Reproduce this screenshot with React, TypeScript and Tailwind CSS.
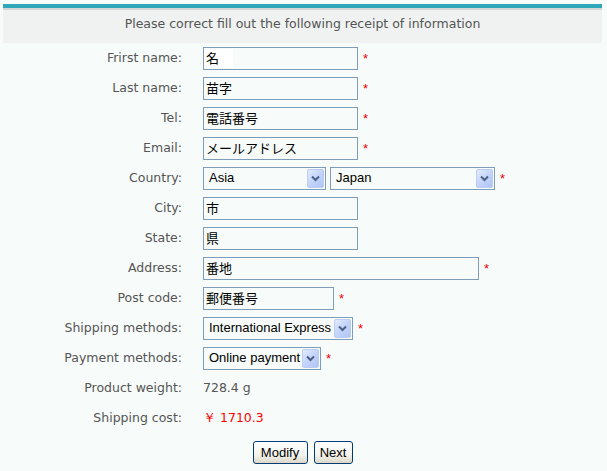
import React from "react";

const labelFont = { fontFamily: '"DejaVu Sans", Verdana, sans-serif' };

function Star() {
  return (
    <span
      className="ml-[5px] inline-block text-[13px] leading-none text-[#ee0000]"
      style={{ fontFamily: '"Liberation Sans", Arial, sans-serif' }}
    >
      *
    </span>
  );
}

function TextBox({ value, w, patch = false }: { value: string; w: string; patch?: boolean }) {
  return (
    <div
      className={
        "h-[23px] border border-[#7f9db9] flex items-center pl-[2px] text-[13px] text-black " +
        w +
        (patch ? " bg-[linear-gradient(to_right,#ffffff_0,#ffffff_29px,transparent_29px)] bg-no-repeat bg-[length:100%_19px] bg-center" : "")
      }
      style={{ fontFamily: '"Noto Sans CJK JP", "DejaVu Sans", sans-serif' }}
    >
      {value}
    </div>
  );
}

function Chevron() {
  return (
    <svg width="9" height="7" viewBox="0 0 9 7">
      <path d="M1 1.5 L4.5 5 L8 1.5" fill="none" stroke="#4d6185" strokeWidth="2" />
    </svg>
  );
}

function Select({ value, w }: { value: string; w: string }) {
  return (
    <div className={"h-[23px] border border-[#7f9db9] flex items-center p-[1px] " + w}>
      <div
        className="flex-1 pl-[4px] text-[13px] text-black whitespace-nowrap overflow-hidden"
        style={{ fontFamily: '"Liberation Sans", Arial, sans-serif' }}
      >
        {value}
      </div>
      <div className="w-[17px] h-full rounded-[2px] border border-[#bccdf3] bg-[linear-gradient(135deg,#e3ebfe_0%,#c3d4fb_50%,#b0c5f4_100%)] flex items-center justify-center">
        <Chevron />
      </div>
    </div>
  );
}

function Row({ label, children }: { label: string; children: React.ReactNode }) {
  return (
    <div className="flex items-center h-[30px]">
      <div className="w-[179px] text-right text-[12.5px] text-[#555555]" style={labelFont}>
        {label}
      </div>
      <div className="ml-[21px] flex items-center">{children}</div>
    </div>
  );
}

function XPButton({ children, w }: { children: React.ReactNode; w: string }) {
  return (
    <div
      className={
        "h-[23px] rounded-[3px] border border-[#003c74] bg-[linear-gradient(to_bottom,#ffffff_0%,#f4f3ee_60%,#dcd8c8_100%)] flex items-center justify-center text-[13px] text-black " +
        w
      }
      style={{ fontFamily: '"Liberation Sans", Arial, sans-serif' }}
    >
      {children}
    </div>
  );
}

export default function App() {
  return (
    <div className="w-[607px] h-[471px] bg-[#f7fbf9] overflow-hidden pt-[4px] pl-[3px] pr-[5px]">
      <div className="h-[4px] bg-[#2ea8b8]" />
      <div className="h-[2px] bg-[#d6d6d6]" />
      <div
        className="h-[33px] bg-[#eff2f0] flex items-center justify-center pb-[4px] text-[12.5px] text-[#555555]"
        style={labelFont}
      >
        Please correct fill out the following receipt of information
      </div>
      <div>
        <Row label="Frirst name:">
          <TextBox value="名" w="w-[155px]" patch />
          <Star />
        </Row>
        <Row label="Last name:">
          <TextBox value="苗字" w="w-[155px]" />
          <Star />
        </Row>
        <Row label="Tel:">
          <TextBox value="電話番号" w="w-[155px]" />
          <Star />
        </Row>
        <Row label="Email:">
          <TextBox value="メールアドレス" w="w-[155px]" />
          <Star />
        </Row>
        <Row label="Country:">
          <Select value="Asia" w="w-[123px]" />
          <div className="w-[4px]" />
          <Select value="Japan" w="w-[165px]" />
          <Star />
        </Row>
        <Row label="City:">
          <TextBox value="市" w="w-[155px]" />
        </Row>
        <Row label="State:">
          <TextBox value="県" w="w-[155px]" />
        </Row>
        <Row label="Address:">
          <TextBox value="番地" w="w-[276px]" />
          <Star />
        </Row>
        <Row label="Post code:">
          <TextBox value="郵便番号" w="w-[131px]" />
          <Star />
        </Row>
        <Row label="Shipping methods:">
          <Select value="International Express" w="w-[150px]" />
          <Star />
        </Row>
        <Row label="Payment methods:">
          <Select value="Online payment" w="w-[118px]" />
          <Star />
        </Row>
        <Row label="Product weight:">
          <span className="text-[12.5px] text-[#555555]" style={labelFont}>
            728.4 g
          </span>
        </Row>
        <Row label="Shipping cost:">
          <span className="text-[12.5px] text-[#ff0000]" style={labelFont}>
            ￥ 1710.3
          </span>
        </Row>
        <div className="flex justify-center gap-[6px] pt-[8px]">
          <XPButton w="w-[55px]">Modify</XPButton>
          <XPButton w="w-[39px]">Next</XPButton>
        </div>
      </div>
    </div>
  );
}
